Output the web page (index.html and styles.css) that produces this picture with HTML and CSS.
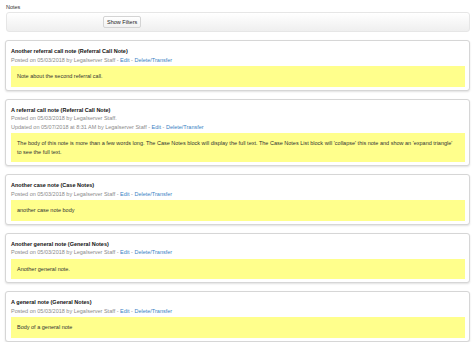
FILE: index.html
```html
<!DOCTYPE html>
<html>
<head>
<meta charset="utf-8">
<link rel="stylesheet" href="styles.css">
</head>
<body>
<div class="page-title">Notes</div>
<div class="filters">
  <button class="filter-btn">Show Filters</button>
</div>

<div class="note">
  <div class="note-title">Another referral call note (Referral Call Note)</div>
  <div class="note-meta">Posted on 05/03/2018 by Legalserver Staff - <a href="#">Edit</a> - <a href="#">Delete/Transfer</a></div>
  <div class="note-body">Note about the second referral call.</div>
</div>

<div class="note">
  <div class="note-title">A referral call note (Referral Call Note)</div>
  <div class="note-meta">Posted on 05/03/2018 by Legalserver Staff.</div>
  <div class="note-meta">Updated on 05/07/2018 at 8:31 AM by Legalserver Staff - <a href="#">Edit</a> - <a href="#">Delete/Transfer</a></div>
  <div class="note-body">The body of this note is more than a few words long. The Case Notes block will display the full text. The Case Notes List block will 'collapse' this note and show an 'expand triangle' to see the full text.</div>
</div>

<div class="note">
  <div class="note-title">Another case note (Case Notes)</div>
  <div class="note-meta">Posted on 05/03/2018 by Legalserver Staff - <a href="#">Edit</a> - <a href="#">Delete/Transfer</a></div>
  <div class="note-body">another case note body</div>
</div>

<div class="note">
  <div class="note-title">Another general note (General Notes)</div>
  <div class="note-meta">Posted on 05/03/2018 by Legalserver Staff - <a href="#">Edit</a> - <a href="#">Delete/Transfer</a></div>
  <div class="note-body">Another general note.</div>
</div>

<div class="note">
  <div class="note-title">A general note (General Notes)</div>
  <div class="note-meta">Posted on 05/03/2018 by Legalserver Staff - <a href="#">Edit</a> - <a href="#">Delete/Transfer</a></div>
  <div class="note-body">Body of a general note</div>
</div>
</body>
</html>
```

FILE: styles.css
```css
html, body {
  margin: 0;
  background: #fff;
}
body {
  padding: 3px 4px 0 5px;
  font-family: "Liberation Sans", Arial, sans-serif;
  font-size: 5.5px;
  line-height: 8.5px;
  color: #222;
}
.page-title {
  padding-left: 1px;
  color: #333;
}
.filters {
  margin: 0.5px 0 0 1px;
  height: 20px;
  box-sizing: border-box;
  border: 1px solid #e6e6e6;
  border-radius: 3px;
  background: linear-gradient(#ffffff, #efefef);
  display: flex;
  align-items: center;
  padding-left: 96px;
}
.filter-btn {
  font-family: inherit;
  font-size: 5.5px;
  line-height: 8px;
  height: 12px;
  padding: 0 3px;
  border: 1px solid #d4d4d4;
  border-radius: 2px;
  background: linear-gradient(#ffffff, #f1f1f1);
  color: #222;
}
.note {
  margin-top: 8px;
  border: 1px solid #d6d6d6;
  border-radius: 3px;
  box-shadow: 0 1px 2px rgba(0,0,0,0.12);
  padding: 6px 4px 3px 5px;
  background: #fff;
}
.note-title {
  font-weight: bold;
  color: #111;
}
.note-meta {
  color: #8a8a8a;
}
.note-meta a {
  color: #3a7fc4;
  text-decoration: none;
}
.note-body {
  margin-top: 2px;
  background: #ffff8c;
  padding: 6px 10px 6px 6px;
  color: #333;
}
```
